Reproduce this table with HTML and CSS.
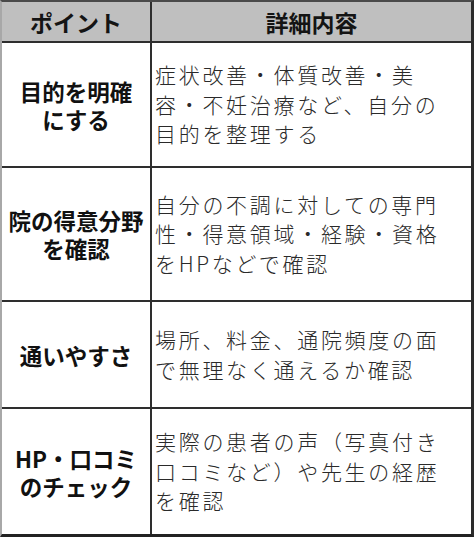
FILE: index.html
```html
<!DOCTYPE html>
<html lang="ja">
<head>
<meta charset="utf-8">
<link rel="stylesheet" href="styles.css">
</head>
<body>
<div class="table">
  <div class="cell head left">ポイント</div>
  <div class="cell head right-h">詳細内容</div>

  <div class="cell key">目的を明確<br>にする</div>
  <div class="cell val">症状改善・体質改善・美<br>容・不妊治療など、自分の<br>目的を整理する</div>

  <div class="cell key">院の得意分野<br>を確認</div>
  <div class="cell val">自分の不調に対しての専門<br>性・得意領域・経験・資格<br>をHPなどで確認</div>

  <div class="cell key">通いやすさ</div>
  <div class="cell val">場所、料金、通院頻度の面<br>で無理なく通えるか確認</div>

  <div class="cell key last">HP・口コミ<br>のチェック</div>
  <div class="cell val last">実際の患者の声（写真付き<br>口コミなど）や先生の経歴<br>を確認</div>
</div>
</body>
</html>
```
FILE: styles.css
```css
html, body {
  margin: 0;
  padding: 0;
  background: #ffffff;
}
.table {
  box-sizing: border-box;
  width: 474px;
  height: 537px;
  display: grid;
  grid-template-columns: 150px 1fr;
  grid-template-rows: 41px 125px 134px 107px 125px;
  border-top: 2px solid #4a4a4a;
  border-left: 2px solid #a8a8a8;
  border-right: 3px solid #2c2c2c;
  border-bottom: 3px solid #222222;
  font-family: "Noto Sans CJK JP", "Noto Sans", sans-serif;
}
.cell {
  box-sizing: border-box;
  border-bottom: 2px solid #2e2e2e;
  display: flex;
  align-items: center;
  white-space: nowrap;
}
.cell.last {
  border-bottom: none;
}
.head {
  background: #bfbfbf;
  justify-content: center;
  font-weight: 700;
  font-size: 23px;
  color: #141414;
}
.left, .key {
  border-right: 2px solid #2e2e2e;
}
.key {
  justify-content: center;
  text-align: center;
  font-weight: 700;
  font-size: 22.5px;
  line-height: 28px;
  color: #111111;
}
.val {
  padding-left: 3px;
  font-weight: 300;
  font-size: 21px;
  letter-spacing: 2.7px;
  line-height: 29.5px;
  color: #2a2a2a;
}
```
